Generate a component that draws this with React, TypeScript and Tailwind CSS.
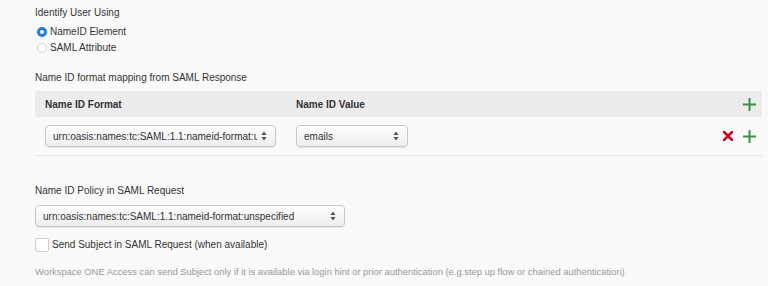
import React from 'react';

const font = { fontFamily: '"Liberation Sans", Arial, sans-serif' };

function Arrows() {
  return (
    <svg width="6" height="10" viewBox="0 0 6 10" className="shrink-0">
      <path d="M3 0.5 L5.6 4 L0.4 4 Z" fill="#555" />
      <path d="M3 9.5 L5.6 6 L0.4 6 Z" fill="#555" />
    </svg>
  );
}

function FakeSelect({ value, className }: { value: string; className: string }) {
  return (
    <div
      className={`flex h-[22px] items-center justify-between gap-[4px] rounded-[4px] border border-[#c9c9c9] bg-gradient-to-b from-white to-[#ededed] pr-[8px] pl-[7px] text-[10px] text-[#333] shadow-[0_1px_1px_rgba(0,0,0,0.08)] ${className}`}
    >
      <span className="min-w-0 overflow-hidden whitespace-nowrap">{value}</span>
      <Arrows />
    </div>
  );
}

function Plus() {
  return (
    <svg width="13" height="13" viewBox="0 0 13 13">
      <rect x="5.5" y="0" width="2" height="13" fill="#3f9142" />
      <rect x="0" y="5.5" width="13" height="2" fill="#3f9142" />
    </svg>
  );
}

function Cross() {
  return (
    <svg width="10" height="10" viewBox="0 0 10 10">
      <path d="M1 1 L9 9 M9 1 L1 9" stroke="#d0021b" strokeWidth="2.6" strokeLinecap="square" />
    </svg>
  );
}

export default function App() {
  return (
    <div className="h-[286px] w-[768px] bg-[#fafafa] pl-[35px] text-[#333]" style={font}>
      <div className="pt-[6px] text-[10px] leading-[14px]">Identify User Using</div>

      <div className="mt-[5px] flex flex-col gap-[2px] pl-[2px] text-[10px] leading-[14px]">
        <label className="flex items-center gap-[3px]">
          <span className="flex h-[10px] w-[10px] items-center justify-center rounded-full bg-[#1c7cf4]">
            <span className="h-[4px] w-[4px] rounded-full bg-white" />
          </span>
          NameID Element
        </label>
        <label className="flex items-center gap-[3px]">
          <span className="h-[10px] w-[10px] rounded-full border border-[#d6d6d6] bg-white" />
          SAML Attribute
        </label>
      </div>

      <div className="mt-[16px] text-[10px] leading-[14px]">Name ID format mapping from SAML Response</div>

      <div className="mt-[6px] mr-[6px]">
        <div className="flex h-[26px] items-center bg-[#ececec] pl-[10px] pr-[6px] text-[10px] font-bold">
          <div className="w-[251px]">Name ID Format</div>
          <div className="flex-1">Name ID Value</div>
          <Plus />
        </div>
        <div className="flex h-[39px] items-center border-b border-[#e6e6e6] pl-[10px] pr-[6px]">
          <div className="w-[251px]">
            <FakeSelect value="urn:oasis:names:tc:SAML:1.1:nameid-format:unspecified" className="w-[231px]" />
          </div>
          <div className="flex-1">
            <FakeSelect value="emails" className="w-[112px]" />
          </div>
          <div className="flex items-center gap-[10px]">
            <Cross />
            <Plus />
          </div>
        </div>
      </div>

      <div className="mt-[28px] text-[10px] leading-[14px]">Name ID Policy in SAML Request</div>

      <FakeSelect
        value="urn:oasis:names:tc:SAML:1.1:nameid-format:unspecified"
        className="mt-[7px] w-[310px]"
      />

      <label className="mt-[11px] flex items-center gap-[3px] text-[10px] leading-[14px]">
        <span className="h-[14px] w-[14px] rounded-[2px] border border-[#cfcfcf] bg-white" />
        Send Subject in SAML Request (when available)
      </label>

      <div className="mt-[14px] text-[9.4px] leading-[12px] text-[#999]">
        Workspace ONE Access can send Subject only if it is available via login hint or prior authentication (e.g.step up flow or chained authentication)
      </div>
    </div>
  );
}
